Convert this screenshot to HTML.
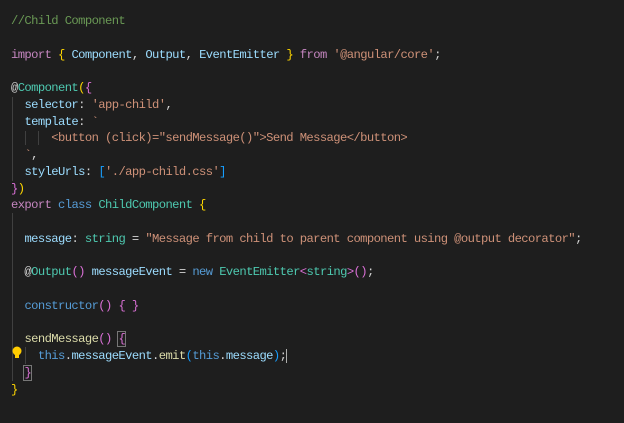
<!DOCTYPE html><html><head><style>
body{margin:0;width:624px;height:423px;background:#1e1e1e;overflow:hidden}
pre{margin:0;position:absolute;left:11px;top:13px;font-family:"Liberation Mono",monospace;font-size:12.2px;letter-spacing:-0.6px;line-height:16.75px;color:#d4d4d4}
.c{color:#6a9955}.k{color:#c586c0}.y{color:#ffd700}.v{color:#9cdcfe}.s{color:#ce9178}.t{color:#4ec9b0}.b{color:#569cd6}.f{color:#dcdcaa}.p{color:#da70d6}.l{color:#179fff}
.g{position:absolute;width:1px;background:#404040}
</style></head><body>
<div class="g" style="left:12px;top:97px;height:84px"></div>
<div class="g" style="left:25px;top:131px;height:14px"></div>
<div class="g" style="left:38px;top:131px;height:14px"></div>
<div class="g" style="left:12px;top:213px;height:168px"></div>
<div class="g" style="left:25px;top:347px;height:17px"></div>
<pre><span class="c">//Child Component</span>

<span class="k">import</span> <span class="y">{</span> <span class="v">Component</span>, <span class="v">Output</span>, <span class="v">EventEmitter</span> <span class="y">}</span> <span class="k">from</span> <span class="s">'@angular/core'</span>;

@<span class="t">Component</span><span class="y">(</span><span class="p">{</span>
  <span class="v">selector</span>: <span class="s">'app-child'</span>,
  <span class="v">template</span>: <span class="s">`</span>
      <span class="s">&lt;button (click)="sendMessage()"&gt;Send Message&lt;/button&gt;</span>
  <span class="s">`</span>,
  <span class="v">styleUrls</span>: <span class="l">[</span><span class="s">'./app-child.css'</span><span class="l">]</span>
<span class="p">}</span><span class="y">)</span>
<span class="k">export</span> <span class="b">class</span> <span class="t">ChildComponent</span> <span class="y">{</span>

  <span class="v">message</span>: <span class="t">string</span> = <span class="s">"Message from child to parent component using @output decorator"</span>;

  @<span class="t">Output</span><span class="p">()</span> <span class="v">messageEvent</span> = <span class="b">new</span> <span class="t">EventEmitter</span><span class="p">&lt;</span><span class="t">string</span><span class="p">&gt;()</span>;

  <span class="b">constructor</span><span class="p">()</span> <span class="p">{</span> <span class="p">}</span>

  <span class="f">sendMessage</span><span class="p">()</span> <span class="p" style="outline:1px solid #777">{</span>
    <span class="b">this</span>.<span class="v">messageEvent</span>.<span class="f">emit</span><span class="l">(</span><span class="b">this</span>.<span class="v">message</span><span class="l">)</span>;<span style="border-left:1px solid #aeafad"></span>
  <span class="p" style="outline:1px solid #777">}</span>
<span class="y">}</span></pre>
<svg style="position:absolute;left:11px;top:345px" width="12" height="16" viewBox="0 0 12 16"><circle cx="6" cy="6" r="4.5" fill="#ffcc00"/><rect x="4" y="10" width="4" height="3" fill="#ffcc00"/></svg>
</body></html>
